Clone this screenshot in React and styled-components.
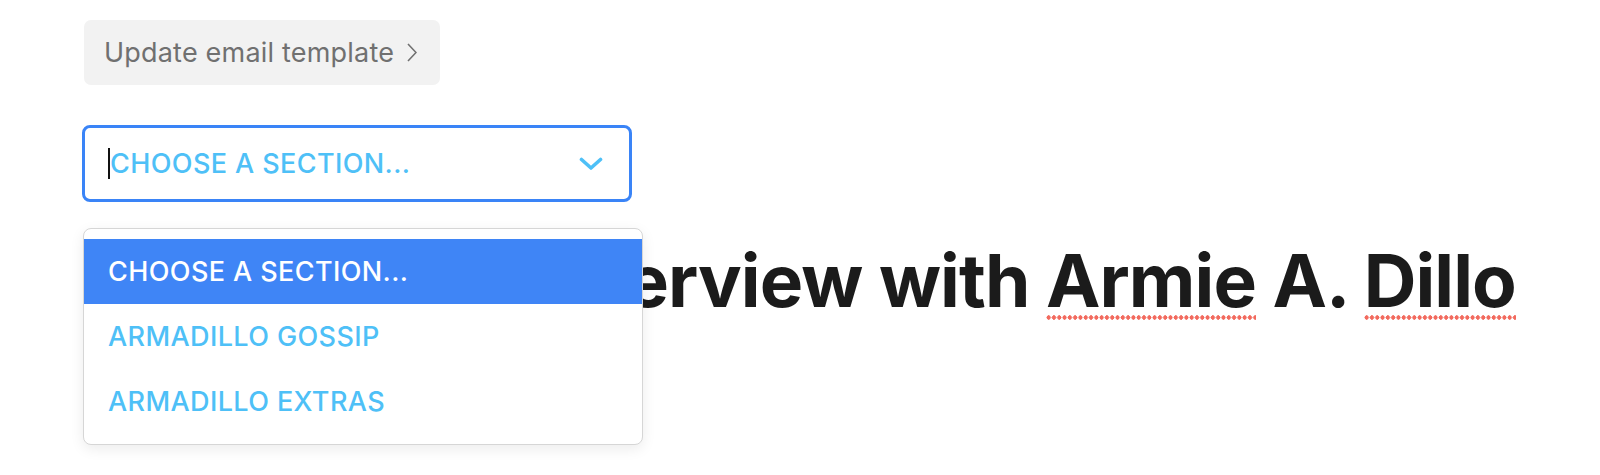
import React from "react";
import styled, { createGlobalStyle } from "styled-components";

const GlobalStyle = createGlobalStyle`
  html, body {
    margin: 0;
    padding: 0;
    background: #ffffff;
  }
  body {
    font-family: Inter, "Noto Sans", "Liberation Sans", sans-serif;
  }
`;

const Page = styled.main`
  display: flex;
  flex-direction: column;
  align-items: flex-start;
  min-height: 100vh;
  box-sizing: border-box;
  padding: 20px 0 0 84px;
`;

const CrumbButton = styled.button`
  box-sizing: border-box;
  display: flex;
  align-items: center;
  justify-content: flex-start;
  gap: 13px;
  height: 65px;
  width: 356px;
  padding: 0 0 0 20px;
  background: #f2f2f2;
  border: none;
  border-radius: 7px;
  font-family: Inter, sans-serif;
  font-size: 27px;
  letter-spacing: 0.2px;
  font-weight: 400;
  white-space: nowrap;
  color: #707070;
  cursor: pointer;
`;

const SelectWrap = styled.div`
  position: relative;
  margin: 40px 0 0 -2px;
`;

const SelectBox = styled.div`
  box-sizing: border-box;
  display: flex;
  align-items: center;
  justify-content: space-between;
  width: 550px;
  height: 77px;
  padding: 0 26px 0 23px;
  border: 3px solid #3a84f7;
  border-radius: 8px;
  background: #fff;
`;

const Caret = styled.span`
  display: inline-block;
  width: 2px;
  height: 31px;
  background: #111;
`;

const Value = styled.span`
  display: flex;
  align-items: center;
  font-size: 27px;
  letter-spacing: 0.4px;
  font-weight: 500;
  color: #4ec0f7;
`;

const Menu = styled.ul`
  position: absolute;
  top: 103px;
  left: 1px;
  z-index: 2;
  box-sizing: border-box;
  width: 560px;
  margin: 0;
  padding: 10px 0;
  list-style: none;
  background: #fff;
  border: 1px solid #d6d6d6;
  border-radius: 8px;
  box-shadow: 0 4px 14px rgba(0, 0, 0, 0.08);
`;

const Option = styled.li`
  display: flex;
  align-items: center;
  height: 65px;
  padding-left: 24px;
  font-size: 27px;
  letter-spacing: 0.4px;
  font-weight: 500;
  color: ${(p) => (p.$active ? "#ffffff" : "#4ec0f7")};
  background: ${(p) => (p.$active ? "#3f85f6" : "transparent")};
`;

const HeadingRow = styled.div`
  align-self: stretch;
  display: flex;
  justify-content: flex-end;
  padding-right: 84px;
  margin-top: 42px;
`;

const Heading = styled.h1`
  margin: 0;
  font-family: Inter, sans-serif;
  font-size: 73px;
  line-height: 1;
  font-weight: 700;
  letter-spacing: -0.9px;
  color: #1b1b1b;
`;

const Misspelled = styled.span`
  background-image: radial-gradient(circle, #f26a5e 2px, transparent 2.4px);
  background-size: 5.3px 5px;
  background-repeat: repeat-x;
  background-position: 0 calc(100% - 5px);
`;

function Chevron() {
  return (
    <svg width="24" height="14" viewBox="0 0 24 14" fill="none">
      <path
        d="M2.5 2.5 L12 11 L21.5 2.5"
        stroke="#4ec0f7"
        strokeWidth="3.6"
        strokeLinecap="round"
        strokeLinejoin="round"
      />
    </svg>
  );
}

function Angle() {
  return (
    <svg width="10" height="19" viewBox="0 0 10 19" fill="none">
      <path d="M1 1 L9 9.5 L1 18" stroke="#707070" strokeWidth="1.6" />
    </svg>
  );
}

const options = ["CHOOSE A SECTION...", "ARMADILLO GOSSIP", "ARMADILLO EXTRAS"];

export default function App() {
  return (
    <>
      <GlobalStyle />
      <Page>
        <CrumbButton>
          <span>Update email template</span>
          <Angle />
        </CrumbButton>
        <SelectWrap>
          <SelectBox>
            <Value>
              <Caret />
              CHOOSE A SECTION...
            </Value>
            <Chevron />
          </SelectBox>
          <Menu>
            {options.map((o, i) => (
              <Option key={o} $active={i === 0}>
                {o}
              </Option>
            ))}
          </Menu>
        </SelectWrap>
        <HeadingRow>
          <Heading>
            Interview with <Misspelled>Armie</Misspelled> A.{" "}
            <Misspelled>Dillo</Misspelled>
          </Heading>
        </HeadingRow>
      </Page>
    </>
  );
}
